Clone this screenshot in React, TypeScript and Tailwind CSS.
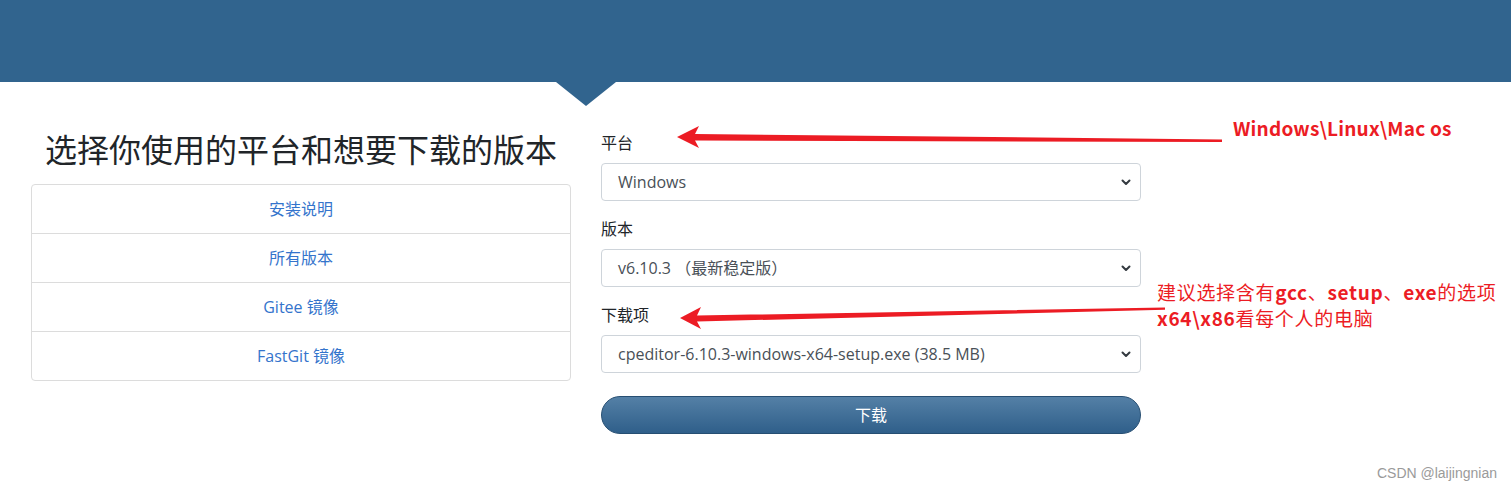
import React from "react";

const font = { fontFamily: '"Open Sans", "Noto Sans CJK SC", sans-serif' };

function Chevron() {
  return (
    <svg width="12" height="12" viewBox="0 0 12 12" className="shrink-0">
      <path d="M2.5 4.5 L6 8 L9.5 4.5" fill="none" stroke="#343a40" strokeWidth="2" strokeLinecap="round" strokeLinejoin="round" />
    </svg>
  );
}

function FakeSelect({ children }: { children: React.ReactNode }) {
  return (
    <div className="flex h-[38px] items-center justify-between rounded-[4px] border border-[#ced4da] bg-white pl-[16px] pr-[8px] text-[16px] text-[#495057]">
      <span>{children}</span>
      <Chevron />
    </div>
  );
}

function Field({ label, children }: { label: string; children: React.ReactNode }) {
  return (
    <div className="mb-[16px]">
      <div className="mb-[8px] h-[24px] text-[16px] leading-[24px] text-[#212529]">{label}</div>
      {children}
    </div>
  );
}

export default function App() {
  const links = ["安装说明", "所有版本", "Gitee 镜像", "FastGit 镜像"];
  return (
    <div className="relative h-[493px] w-[1511px] overflow-hidden bg-white" style={font}>
      <div className="relative h-[82px] bg-[#31648e]">
        <div className="absolute left-[556px] top-full h-0 w-0 border-l-[30px] border-r-[30px] border-t-[24px] border-l-transparent border-r-transparent border-t-[#31648e]" />
      </div>

      <div className="flex pl-[31px] pt-[49px]">
        <div className="w-[540px]">
          <h1 className="mb-[15px] text-center text-[32px] leading-[38px] font-normal text-[#212529]">
            选择你使用的平台和想要下载的版本
          </h1>
          <div className="rounded-[4px] border border-[#dcdcdc]">
            {links.map((l, i) => (
              <div
                key={l}
                className={`flex items-center justify-center text-[16px] text-[#3474cc] ${i > 0 ? "h-[49px] border-t border-[#dcdcdc]" : "h-[48px]"}`}
              >
                {l}
              </div>
            ))}
          </div>
        </div>

        <div className="ml-[30px] w-[540px]">
          <Field label="平台">
            <FakeSelect>Windows</FakeSelect>
          </Field>
          <Field label="版本">
            <FakeSelect>v6.10.3 （最新稳定版）</FakeSelect>
          </Field>
          <Field label="下载项">
            <FakeSelect>cpeditor-6.10.3-windows-x64-setup.exe (38.5 MB)</FakeSelect>
          </Field>
          <button className="mt-[23px] flex h-[38px] w-full items-center justify-center rounded-full border border-[#264e72] bg-gradient-to-b from-[#5480a6] to-[#2f5f8a] text-[16px] text-white">
            下载
          </button>
        </div>
      </div>

      <svg className="pointer-events-none absolute left-0 top-0" width="1511" height="493" viewBox="0 0 1511 493">
        <polygon points="677,137 699,126 695,134 1222,139.5 1222,142 695,140.5 699,148" fill="#ec1c24" />
        <polygon points="680,318 701,307 697,315.5 1165,307.5 1165,309.8 697,321.5 701,329" fill="#ec1c24" />
      </svg>

      <div
        className="absolute left-[1233px] top-[116px] text-[19px] leading-[24px] font-bold tracking-[0.2px] text-[#ec1c24]"
        style={{ fontFamily: '"Noto Sans CJK SC", "Open Sans", sans-serif' }}
      >
        Windows\Linux\Mac os
      </div>
      <div
        className="absolute left-[1157px] top-[279px] text-[19px] leading-[26px] tracking-[0.7px] text-[#ec1c24]"
        style={{ fontFamily: '"Noto Sans CJK SC", "Open Sans", sans-serif' }}
      >
        <div className="whitespace-nowrap">
          建议选择含有<b>gcc</b>、<b>setup</b>、<b>exe</b>的选项
        </div>
        <div className="whitespace-nowrap">
          <b>x64\x86</b>看每个人的电脑
        </div>
      </div>

      <div
        className="absolute right-[14px] top-[463px] text-[14px] leading-[20px] text-[#9a9a9a]"
        style={{ fontFamily: '"Liberation Sans", "Noto Sans", sans-serif' }}
      >
        CSDN @laijingnian
      </div>
    </div>
  );
}
